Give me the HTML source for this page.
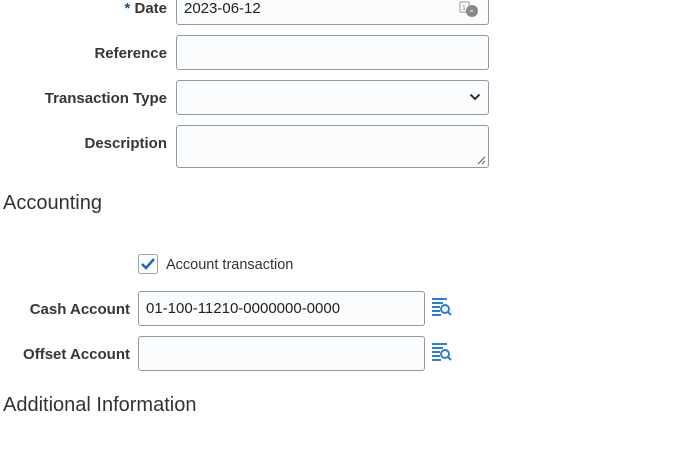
<!DOCTYPE html>
<html><head><style>
body{margin:0;width:696px;height:459px;background:#fff;font-family:"Liberation Sans",Arial,sans-serif;position:relative;overflow:hidden}
.l{position:absolute;font-size:15px;font-weight:bold;color:#3a3533;text-align:right;line-height:16px}
.i{position:absolute;box-sizing:border-box;border:1px solid #8d9aa7;border-radius:3px;background:#fbfcfe;font-size:15px;color:#222;padding-left:7px}
.h{position:absolute;left:3px;font-size:20px;color:#333}
</style></head><body>
<div class="l" style="right:529px;top:1px"><span style="color:#1a4e8c">*</span> Date</div>
<div class="i" style="left:176px;top:-10px;width:313px;height:35px;line-height:33px;padding-top:1px">2023-06-12</div>
<svg style="position:absolute;left:459px;top:1px" width="22" height="16"><rect x="1" y="1" width="9" height="10" fill="#fff" stroke="#999"/><text x="3" y="9" font-size="7" fill="#777" font-family="Liberation Sans">1</text><circle cx="13" cy="10" r="6" fill="#888"/><path d="M11 10h3" stroke="#fff"/></svg>
<div class="l" style="right:529px;top:46px">Reference</div>
<div class="i" style="left:176px;top:35px;width:313px;height:35px"></div>
<div class="l" style="right:529px;top:91px">Transaction Type</div>
<div class="i" style="left:176px;top:80px;width:313px;height:35px"></div>
<svg style="position:absolute;left:469px;top:92px" width="12" height="10"><path d="M1.5 2.5L6 7L10.5 2.5" stroke="#333" stroke-width="2" fill="none"/></svg>
<div class="l" style="right:529px;top:136px">Description</div>
<div class="i" style="left:176px;top:125px;width:313px;height:43px"></div>
<svg style="position:absolute;left:477px;top:156px" width="9" height="9"><path d="M1 8L8 1M5 8L8 5" stroke="#555" stroke-width="1"/></svg>
<div class="h" style="top:192px">Accounting</div>
<svg style="position:absolute;left:138px;top:254px" width="20" height="20"><rect x=".5" y=".5" width="19" height="19" rx="2" fill="#fbfcfe" stroke="#9aa5b0"/><path d="M4 10l4 4 8-9" stroke="#1b6ac9" stroke-width="2.6" fill="none"/></svg>
<div style="position:absolute;left:166px;top:257px;font-size:14.5px;color:#333">Account transaction</div>
<div class="l" style="right:566px;top:302px">Cash Account</div>
<div class="i" style="left:138px;top:291px;width:287px;height:35px;line-height:33px">01-100-11210-0000000-0000</div>
<div class="l" style="right:566px;top:347px">Offset Account</div>
<div class="i" style="left:138px;top:336px;width:287px;height:35px"></div>
<svg style="position:absolute;left:431px;top:297px" width="22" height="22"><g stroke="#2a7fd4" stroke-width="2" fill="none"><path d="M1 2h15M1 6h11M1 10h8M1 14h8M1 18h9"/><circle cx="14" cy="12" r="4"/><path d="M17 15l3 3"/></g></svg>
<svg style="position:absolute;left:431px;top:342px" width="22" height="22"><g stroke="#2a7fd4" stroke-width="2" fill="none"><path d="M1 2h15M1 6h11M1 10h8M1 14h8M1 18h9"/><circle cx="14" cy="12" r="4"/><path d="M17 15l3 3"/></g></svg>
<div class="h" style="top:394px">Additional Information</div>
</body></html>
